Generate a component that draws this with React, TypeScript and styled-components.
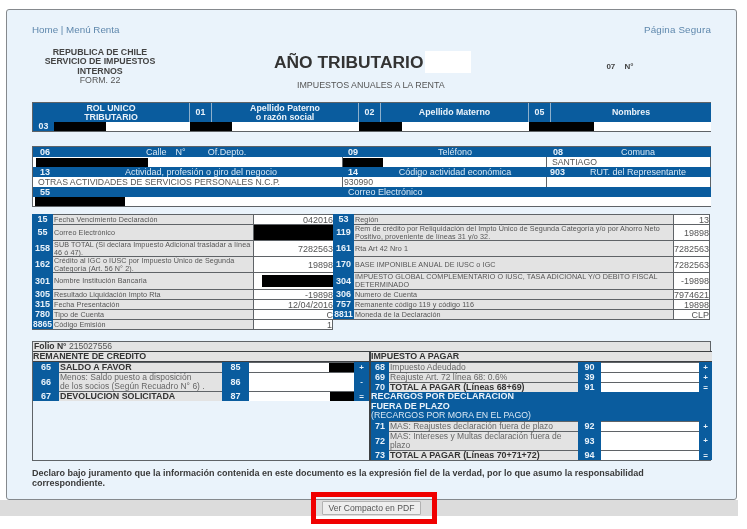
import React from "react";
import styled, { createGlobalStyle } from "styled-components";

const Global = createGlobalStyle`
  html, body { margin: 0; padding: 0; background: #fff; }
  body { font-family: "Liberation Sans", Arial, sans-serif; color: #555; }
  * { box-sizing: border-box; }
`;

const BLUE = "#0a5c9e";
const LINE = "#5f6367";

const Page = styled.div`
  width: 747px;
  height: 529px;
  padding-top: 9px;
  overflow: hidden;
  filter: blur(0.45px);
`;
const Panel = styled.main`
  width: 731px;
  height: 491px;
  margin-left: 6px;
  padding: 14px 25px 0;
  background: #eaf3fb;
  border: 1px solid #85898d;
  border-radius: 3px;
`;
const Nav = styled.nav`
  display: flex;
  justify-content: space-between;
  font-size: 9.8px;
  line-height: 12px;
  color: #5f88ad;
`;
const Secure = styled.span`
  letter-spacing: 0.17px;
`;
const Head = styled.header`
  display: grid;
  grid-template-columns: 136px 1fr;
  height: 56px;
  margin-top: 10px;
`;
const Agency = styled.div`
  text-align: center;
  font-size: 8.8px;
  line-height: 9.4px;
  padding-top: 2px;
  b { display: block; color: #444; }
`;
const TitleBlock = styled.div`
  display: flex;
  flex-direction: column;
  padding: 5px 0 0 106px;
`;
const TitleRow = styled.div`
  display: flex;
  align-items: center;
`;
const Title = styled.h1`
  margin: 0;
  font-size: 17.4px;
  line-height: 22px;
  font-weight: bold;
  color: #333;
`;
const TitleBlank = styled.span`
  width: 46px;
  height: 22px;
  margin-left: 2px;
  background: #fff;
`;
const FormNo = styled.span`
  margin: 9px 0 0 135px;
  font-size: 8px;
  font-weight: bold;
  word-spacing: 7px;
  color: #444;
`;
const Subtitle = styled.div`
  margin: 7px 0 0 23px;
  font-size: 8.9px;
  line-height: 11px;
`;
const Identity = styled.section`
  display: grid;
  grid-template-columns: 157px 22px 147px 22px 148px 22px 160px;
  border: 1px solid ${LINE};
`;
const IdHead = styled.div`
  height: 19px;
  display: flex;
  align-items: center;
  justify-content: center;
  text-align: center;
  background: ${BLUE};
  color: #e9f2fa;
  font-size: 8.8px;
  line-height: 9px;
  font-weight: bold;
  border-right: 1px solid #8fb0cc;
  &:nth-child(7) { border-right: 0; }
`;
const IdData = styled.div<{ $span: number }>`
  grid-column: span ${(p) => p.$span};
  height: 9px;
  display: flex;
  background: #fff;
`;
const IdNum = styled.span`
  width: 21px;
  background: ${BLUE};
  color: #e9f2fa;
  font-size: 8.8px;
  line-height: 9px;
  font-weight: bold;
  text-align: center;
`;
const Redacted = styled.span<{ $w: number; $h?: number }>`
  display: block;
  flex: none;
  width: ${(p) => p.$w}px;
  height: ${(p) => p.$h ?? 9}px;
  background: #000;
`;
const Address = styled.section`
  display: grid;
  grid-template-columns: 310px 204px 164px;
  margin-top: 14px;
  border: 1px solid ${LINE};
`;
const AddrHead = styled.div`
  height: 10px;
  display: flex;
  align-items: center;
  background: ${BLUE};
  color: #d9e8f4;
  font-size: 9px;
  line-height: 10px;
  white-space: nowrap;
`;
const AddrHeadNum = styled.b<{ $w: number; $pad?: number }>`
  flex: none;
  width: ${(p) => p.$w}px;
  padding-left: ${(p) => p.$pad ?? 7}px;
  color: #e9f2fa;
`;
const AddrHeadLabel = styled.span`
  flex: 1;
  text-align: center;
`;
const AddrHeadPart = styled.span<{ $ml?: number }>`
  margin-left: ${(p) => p.$ml ?? 0}px;
`;
const AddrHeadWide = styled(AddrHead)`
  grid-column: 1 / -1;
`;
const AddrValue = styled.div<{ $pad?: number }>`
  height: 10px;
  display: flex;
  align-items: center;
  overflow: hidden;
  white-space: nowrap;
  background: #fff;
  color: #555;
  font-size: 8.7px;
  padding-left: ${(p) => p.$pad ?? 1}px;
  border-right: 1px solid ${LINE};
  &:last-child { border-right: 0; }
`;
const AddrWide = styled(AddrValue)`
  grid-column: 1 / -1;
  height: 9px;
`;
const Summary = styled.section`
  display: grid;
  grid-template-columns: 21px 201px 79px 21px 320px 36px;
  grid-template-rows: 10px 16px 16px 16px 17px 10px 10px 10px 10px;
  margin-top: 7px;
`;
const SumNum = styled.div<{ $small?: boolean }>`
  display: flex;
  align-items: center;
  justify-content: center;
  background: ${BLUE};
  color: #e9f2fa;
  font-size: ${(p) => (p.$small ? 8.5 : 9)}px;
  font-weight: bold;
  white-space: nowrap;
  overflow: hidden;
`;
const SumLabel = styled.div`
  display: flex;
  align-items: center;
  padding-left: 1px;
  background: #e3e3e3;
  border: solid ${LINE};
  border-width: 1px 1px 0 0;
  font-size: 7.2px;
  line-height: 7.6px;
  letter-spacing: 0.09px;
  color: #555;
  overflow: hidden;
`;
const SumValue = styled.div`
  display: flex;
  align-items: center;
  justify-content: flex-end;
  background: #fff;
  border-top: 1px solid ${LINE};
  font-size: 9px;
  color: #555;
  white-space: nowrap;
  overflow: hidden;
`;
const SumBlack = styled(SumValue)`
  background: #000;
`;
const SumValueRight = styled(SumValue)`
  border-right: 1px solid ${LINE};
`;
const RightCap = styled.div`
  grid-column: 4 / span 3;
  height: 1px;
  background: ${LINE};
`;
const BottomLine = styled.div`
  grid-column: 1 / span 3;
  height: 1px;
  background: ${LINE};
`;
const Tax = styled.section`
  margin-top: 11px;
  border: 1px solid ${LINE};
  height: 120px;
`;
const Folio = styled.div`
  height: 9px;
  background: #e3e3e3;
  font-size: 8.6px;
  line-height: 9px;
  padding-left: 1px;
  b { color: #333; }
`;
const TaxColumns = styled.div`
  display: grid;
  grid-template-columns: 337px 1fr;
  height: 109px;
`;
const TaxCol = styled.div`
  border: 1px solid #3d4043;
  border-width: 1px 1px 0 0;
`;
const TaxColRight = styled(TaxCol)`
  border-left: 1px solid #3d4043;
  border-right: 0;
  background: ${BLUE};
`;
const TaxHeading = styled.div`
  height: 10px;
  background: #e3e3e3;
  border-bottom: 1px solid #3d4043;
  font-size: 8.9px;
  line-height: 9px;
  font-weight: bold;
  color: #333;
`;
const TaxRow = styled.div<{ $cols: string; $h: number }>`
  display: grid;
  grid-template-columns: ${(p) => p.$cols};
  height: ${(p) => p.$h}px;
`;
const TaxNum = styled.div`
  display: flex;
  align-items: center;
  justify-content: center;
  background: ${BLUE};
  color: #e9f2fa;
  font-size: 9px;
  font-weight: bold;
`;
const TaxLabel = styled.div<{ $strong?: boolean }>`
  display: flex;
  align-items: center;
  padding-left: 1px;
  background: #e3e3e3;
  border-top: 1px solid ${LINE};
  font-size: ${(p) => (p.$strong ? 8.9 : 8.5)}px;
  line-height: 9px;
  font-weight: ${(p) => (p.$strong ? "bold" : "normal")};
  color: ${(p) => (p.$strong ? "#333" : "#666")};
  white-space: pre-line;
  overflow: hidden;
`;
const TaxValue = styled.div`
  display: flex;
  justify-content: flex-end;
  background: #fff;
  border-top: 1px solid ${LINE};
`;
const TaxBlack = styled.span<{ $w: number }>`
  display: block;
  width: ${(p) => p.$w}px;
  background: #000;
`;
const TaxSign = styled(TaxNum)`
  font-size: 8px;
`;
const Surcharge = styled.div`
  height: 29px;
  background: ${BLUE};
  color: #e9f2fa;
  font-size: 9px;
  line-height: 9.5px;
  b { display: block; }
  span { font-size: 8.75px; color: #d9e8f4; }
`;
const Oath = styled.p`
  margin: 7px 0 0;
  font-size: 9px;
  line-height: 10px;
  font-weight: bold;
  color: #3a3a3a;
`;
const Strip = styled.footer`
  width: 738px;
  height: 16px;
  display: flex;
  justify-content: center;
  align-items: center;
  padding: 0 0 0 5px;
  background: #dcdcdc;
`;
const ButtonWrap = styled.div`
  position: relative;
`;
const PdfButton = styled.button`
  display: block;
  width: 99px;
  height: 14px;
  padding: 0;
  background: #eeeeee;
  border: 1px solid #b2b2b2;
  border-radius: 1px;
  font: 8.6px "Liberation Sans", Arial, sans-serif;
  color: #555;
`;
const RedFrame = styled.div`
  position: absolute;
  left: -11px;
  right: -16px;
  top: -9px;
  bottom: -9px;
  border: 5px solid #f00000;
  pointer-events: none;
`;

const LEFT_COLS = "26px 163px 27px 105px 15px";
const RIGHT_COLS = "18px 189px 23px 98px 13px";

export default function App() {
  return (
    <Page>
      <Global />
      <Panel>
        <Nav>
          <span>Home | Menú Renta</span>
          <Secure>Página Segura</Secure>
        </Nav>
        <Head>
          <Agency>
            <b>REPUBLICA DE CHILE</b>
            <b>SERVICIO DE IMPUESTOS</b>
            <b>INTERNOS</b>
            FORM. 22
          </Agency>
          <TitleBlock>
            <TitleRow>
              <Title>AÑO TRIBUTARIO</Title>
              <TitleBlank />
              <FormNo>07 N°</FormNo>
            </TitleRow>
            <Subtitle>IMPUESTOS ANUALES A LA RENTA</Subtitle>
          </TitleBlock>
        </Head>

        <Identity>
          <IdHead>ROL UNICO<br />TRIBUTARIO</IdHead>
          <IdHead>01</IdHead>
          <IdHead>Apellido Paterno<br />o razón social</IdHead>
          <IdHead>02</IdHead>
          <IdHead>Apellido Materno</IdHead>
          <IdHead>05</IdHead>
          <IdHead>Nombres</IdHead>
          <IdData $span={1}><IdNum>03</IdNum><Redacted $w={52} /></IdData>
          <IdData $span={2}><Redacted $w={42} /></IdData>
          <IdData $span={2}><Redacted $w={43} /></IdData>
          <IdData $span={2}><Redacted $w={65} /></IdData>
        </Identity>

        <Address>
          <AddrHead>
            <AddrHeadNum $w={113}>06</AddrHeadNum>
            <AddrHeadPart>Calle</AddrHeadPart>
            <AddrHeadPart $ml={9}>N°</AddrHeadPart>
            <AddrHeadPart $ml={22}>Of.Depto.</AddrHeadPart>
          </AddrHead>
          <AddrHead>
            <AddrHeadNum $w={20} $pad={5}>09</AddrHeadNum>
            <AddrHeadLabel>Teléfono</AddrHeadLabel>
          </AddrHead>
          <AddrHead>
            <AddrHeadNum $w={18} $pad={6}>08</AddrHeadNum>
            <AddrHeadLabel>Comuna</AddrHeadLabel>
          </AddrHead>
          <AddrValue $pad={3}><Redacted $w={112} /></AddrValue>
          <AddrValue $pad={0}><Redacted $w={40} /></AddrValue>
          <AddrValue $pad={5}>SANTIAGO</AddrValue>
          <AddrHead>
            <AddrHeadNum $w={26}>13</AddrHeadNum>
            <AddrHeadLabel>Actividad, profesión o giro del negocio</AddrHeadLabel>
          </AddrHead>
          <AddrHead>
            <AddrHeadNum $w={20} $pad={5}>14</AddrHeadNum>
            <AddrHeadLabel>Código actividad económica</AddrHeadLabel>
          </AddrHead>
          <AddrHead>
            <AddrHeadNum $w={18} $pad={3}>903</AddrHeadNum>
            <AddrHeadLabel>RUT. del Representante</AddrHeadLabel>
          </AddrHead>
          <AddrValue $pad={5}>OTRAS ACTIVIDADES DE SERVICIOS PERSONALES N.C.P.</AddrValue>
          <AddrValue>930990</AddrValue>
          <AddrValue />
          <AddrHeadWide>
            <AddrHeadNum $w={315}>55</AddrHeadNum>
            <span>Correo Electrónico</span>
          </AddrHeadWide>
          <AddrWide $pad={2}><Redacted $w={90} /></AddrWide>
        </Address>

        <Summary>
          <SumNum>15</SumNum><SumLabel>Fecha Vencimiento Declaración</SumLabel><SumValue>042016</SumValue>
          <SumNum>53</SumNum><SumLabel>Región</SumLabel><SumValueRight>13</SumValueRight>

          <SumNum>55</SumNum><SumLabel>Correo Electrónico</SumLabel><SumBlack />
          <SumNum>119</SumNum><SumLabel>Rem de crédito por Reliquidación del Impto Único de Segunda Categoría y/o por Ahorro Neto Positivo, proveniente de líneas 31 y/o 32.</SumLabel><SumValueRight>19898</SumValueRight>

          <SumNum>158</SumNum><SumLabel>SUB TOTAL (Si declara Impuesto Adicional trasladar a línea 46 ó 47).</SumLabel><SumValue>7282563</SumValue>
          <SumNum>161</SumNum><SumLabel>Rta Art 42 Nro 1</SumLabel><SumValueRight>7282563</SumValueRight>

          <SumNum>162</SumNum><SumLabel>Crédito al IGC o IUSC por Impuesto Único de Segunda Categoría (Art. 56 N° 2).</SumLabel><SumValue>19898</SumValue>
          <SumNum>170</SumNum><SumLabel>BASE IMPONIBLE ANUAL DE IUSC o IGC</SumLabel><SumValueRight>7282563</SumValueRight>

          <SumNum>301</SumNum><SumLabel>Nombre Institución Bancaria</SumLabel><SumValue><Redacted $w={71} $h={12} /></SumValue>
          <SumNum>304</SumNum><SumLabel>IMPUESTO GLOBAL COMPLEMENTARIO O IUSC, TASA ADICIONAL Y/O DEBITO FISCAL DETERMINADO</SumLabel><SumValueRight>-19898</SumValueRight>

          <SumNum>305</SumNum><SumLabel>Resultado Liquidación Impto Rta</SumLabel><SumValue>-19898</SumValue>
          <SumNum>306</SumNum><SumLabel>Numero de Cuenta</SumLabel><SumValueRight>7974621</SumValueRight>

          <SumNum>315</SumNum><SumLabel>Fecha Presentación</SumLabel><SumValue>12/04/2016</SumValue>
          <SumNum>757</SumNum><SumLabel>Remanente código 119 y código 116</SumLabel><SumValueRight>19898</SumValueRight>

          <SumNum>780</SumNum><SumLabel>Tipo de Cuenta</SumLabel><SumValue>C</SumValue>
          <SumNum $small>8811</SumNum><SumLabel>Moneda de la Declaración</SumLabel><SumValueRight>CLP</SumValueRight>

          <SumNum $small>8865</SumNum><SumLabel>Código Emisión</SumLabel><SumValueRight>1</SumValueRight>
          <RightCap />
          <BottomLine />
        </Summary>

        <Tax>
          <Folio><b>Folio N°</b> 215027556</Folio>
          <TaxColumns>
            <TaxCol>
              <TaxHeading>REMANENTE DE CREDITO</TaxHeading>
              <TaxRow $cols={LEFT_COLS} $h={10}>
                <TaxNum>65</TaxNum><TaxLabel $strong>SALDO A FAVOR</TaxLabel><TaxNum>85</TaxNum>
                <TaxValue><TaxBlack $w={25} /></TaxValue><TaxSign>+</TaxSign>
              </TaxRow>
              <TaxRow $cols={LEFT_COLS} $h={19}>
                <TaxNum>66</TaxNum><TaxLabel>{"Menos: Saldo puesto a disposición\nde los socios (Según Recuadro N° 6) ."}</TaxLabel><TaxNum>86</TaxNum>
                <TaxValue /><TaxSign>-</TaxSign>
              </TaxRow>
              <TaxRow $cols={LEFT_COLS} $h={10}>
                <TaxNum>67</TaxNum><TaxLabel $strong>DEVOLUCIÓN SOLICITADA</TaxLabel><TaxNum>87</TaxNum>
                <TaxValue><TaxBlack $w={24} /></TaxValue><TaxSign>=</TaxSign>
              </TaxRow>
            </TaxCol>
            <TaxColRight>
              <TaxHeading>IMPUESTO A PAGAR</TaxHeading>
              <TaxRow $cols={RIGHT_COLS} $h={10}>
                <TaxNum>68</TaxNum><TaxLabel>Impuesto Adeudado</TaxLabel><TaxNum>90</TaxNum><TaxValue /><TaxSign>+</TaxSign>
              </TaxRow>
              <TaxRow $cols={RIGHT_COLS} $h={10}>
                <TaxNum>69</TaxNum><TaxLabel>Reajuste Art. 72 línea 68: 0.6%</TaxLabel><TaxNum>39</TaxNum><TaxValue /><TaxSign>+</TaxSign>
              </TaxRow>
              <TaxRow $cols={RIGHT_COLS} $h={10}>
                <TaxNum>70</TaxNum><TaxLabel $strong>TOTAL A PAGAR (Líneas 68+69)</TaxLabel><TaxNum>91</TaxNum><TaxValue /><TaxSign>=</TaxSign>
              </TaxRow>
              <Surcharge>
                <b>RECARGOS POR DECLARACIÓN</b>
                <b>FUERA DE PLAZO</b>
                <span>(RECARGOS POR MORA EN EL PAGO)</span>
              </Surcharge>
              <TaxRow $cols={RIGHT_COLS} $h={10}>
                <TaxNum>71</TaxNum><TaxLabel>MAS: Reajustes declaración fuera de plazo</TaxLabel><TaxNum>92</TaxNum><TaxValue /><TaxSign>+</TaxSign>
              </TaxRow>
              <TaxRow $cols={RIGHT_COLS} $h={19}>
                <TaxNum>72</TaxNum><TaxLabel>MAS: Intereses y Multas declaración fuera de plazo</TaxLabel><TaxNum>93</TaxNum><TaxValue /><TaxSign>+</TaxSign>
              </TaxRow>
              <TaxRow $cols={RIGHT_COLS} $h={10}>
                <TaxNum>73</TaxNum><TaxLabel $strong>TOTAL A PAGAR (Líneas 70+71+72)</TaxLabel><TaxNum>94</TaxNum><TaxValue /><TaxSign>=</TaxSign>
              </TaxRow>
            </TaxColRight>
          </TaxColumns>
        </Tax>

        <Oath>
          Declaro bajo juramento que la información contenida en este documento es la expresión fiel de la verdad, por lo que asumo la responsabilidad correspondiente.
        </Oath>
      </Panel>
      <Strip>
        <ButtonWrap>
          <PdfButton>Ver Compacto en PDF</PdfButton>
          <RedFrame />
        </ButtonWrap>
      </Strip>
    </Page>
  );
}
